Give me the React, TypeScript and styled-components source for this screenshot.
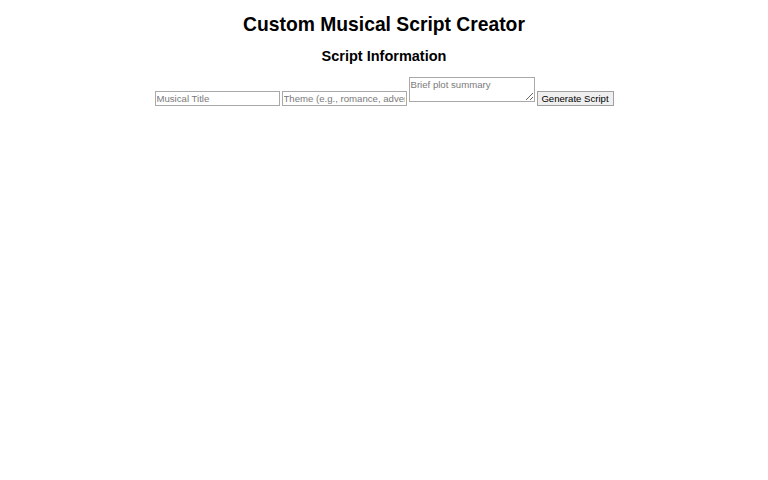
import React from "react";
import styled, { createGlobalStyle } from "styled-components";

const GlobalStyle = createGlobalStyle`
  html, body {
    margin: 0;
    padding: 0;
    background: #ffffff;
  }
  body {
    font-family: "Liberation Sans", Arial, sans-serif;
    color: #000000;
  }
`;

const Page = styled.div`
  display: flex;
  flex-direction: column;
  align-items: center;
  padding-top: 14px;
`;

const Title = styled.h1`
  margin: 0;
  font-size: 19.3px;
  line-height: 22px;
  font-weight: bold;
`;

const SectionTitle = styled.h2`
  margin: 12px 0 0;
  font-size: 14.5px;
  line-height: 17px;
  font-weight: bold;
`;

const Form = styled.form`
  display: flex;
  align-items: flex-end;
  gap: 2px;
  margin-top: 12px;
`;

const TextField = styled.input`
  box-sizing: border-box;
  width: 125px;
  height: 15px;
  margin: 0;
  padding: 0 1px;
  border: 1px solid #a9a9a9;
  font-family: "Liberation Sans", Arial, sans-serif;
  font-size: 9.6px;
  color: #000;
  background: #fff;
  &::placeholder {
    color: #7a7a7a;
  }
`;

const Summary = styled.textarea`
  box-sizing: border-box;
  width: 126px;
  height: 25px;
  margin: 0 0 4px;
  padding: 1px 1px;
  border: 1px solid #a9a9a9;
  font-family: "Liberation Sans", Arial, sans-serif;
  font-size: 9.6px;
  line-height: 11px;
  resize: both;
  &::placeholder {
    color: #7a7a7a;
  }
`;

const SubmitButton = styled.button`
  box-sizing: border-box;
  width: 77px;
  height: 15px;
  margin: 0;
  padding: 0;
  border: 1px solid #a0a0a0;
  background: #efefef;
  font-family: "Liberation Sans", Arial, sans-serif;
  font-size: 9.6px;
  color: #000;
  line-height: 13px;
`;

export default function App() {
  return (
    <>
      <GlobalStyle />
      <Page>
        <Title>Custom Musical Script Creator</Title>
        <SectionTitle>Script Information</SectionTitle>
        <Form onSubmit={(e) => e.preventDefault()}>
          <TextField type="text" placeholder="Musical Title" />
          <TextField type="text" placeholder="Theme (e.g., romance, adventure)" />
          <Summary placeholder="Brief plot summary" />
          <SubmitButton type="submit">Generate Script</SubmitButton>
        </Form>
      </Page>
    </>
  );
}
